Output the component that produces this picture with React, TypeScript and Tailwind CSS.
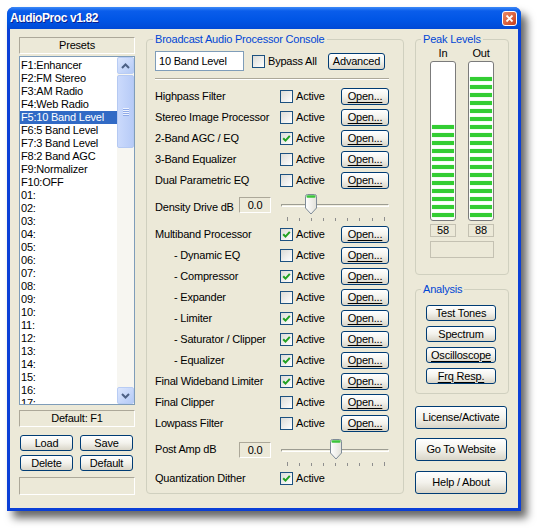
import React from 'react';

type Row = { label: string; on: boolean; sub?: boolean };

const presets = [
  'F1:Enhancer',
  'F2:FM Stereo',
  'F3:AM Radio',
  'F4:Web Radio',
  'F5:10 Band Level',
  'F6:5 Band Level',
  'F7:3 Band Level',
  'F8:2 Band AGC',
  'F9:Normalizer',
  'F10:OFF',
  ...Array.from({ length: 17 }, (_, i) => String(i + 1).padStart(2, '0') + ':'),
];

const topRows: Row[] = [
  { label: 'Highpass Filter', on: false },
  { label: 'Stereo Image Processor', on: false },
  { label: '2-Band AGC / EQ', on: true },
  { label: '3-Band Equalizer', on: false },
  { label: 'Dual Parametric EQ', on: false },
];

const midRows: Row[] = [
  { label: 'Multiband Processor', on: true },
  { label: '- Dynamic EQ', on: false, sub: true },
  { label: '- Compressor', on: true, sub: true },
  { label: '- Expander', on: false, sub: true },
  { label: '- Limiter', on: true, sub: true },
  { label: '- Saturator / Clipper', on: true, sub: true },
  { label: '- Equalizer', on: true, sub: true },
  { label: 'Final Wideband Limiter', on: true },
  { label: 'Final Clipper', on: false },
  { label: 'Lowpass Filter', on: false },
];

const sunken = 'border border-t-[#ACA899] border-l-[#ACA899] border-b-white border-r-white bg-[#ECE9D8]';

const XpButton = ({ children, className = '', u }: { children: React.ReactNode; className?: string; u?: boolean }) => (
  <button
    type="button"
    className={`flex items-center justify-center rounded-[3px] border border-[#003C74] bg-linear-to-b from-white via-[#F3F2EC] to-[#D9D5C8] text-black leading-none ${className}`}
  >
    <span className={u ? 'underline underline-offset-[2px]' : ''}>{children}</span>
  </button>
);

const Check = ({ on }: { on?: boolean }) => (
  <span className="flex h-[13px] w-[13px] shrink-0 items-center justify-center border border-[#1C5180] bg-linear-to-br from-[#DCDCD7] to-white">
    {on && (
      <svg width="9" height="9" viewBox="0 0 9 9">
        <path d="M1.2 4.2 L3.5 6.6 L7.8 1.8" stroke="#21A121" strokeWidth="2" fill="none" />
      </svg>
    )}
  </span>
);

const ProcRow = ({ row }: { row: Row }) => (
  <div className="flex h-[21px] items-center">
    <span className={`w-[125px] ${row.sub ? 'pl-[19px]' : ''}`}>{row.label}</span>
    <div className="flex w-[61px] items-center">
      <Check on={row.on} />
      <span className="ml-[3px]">Active</span>
    </div>
    <XpButton className="h-[17px] w-[48px]" u>
      Open...
    </XpButton>
  </div>
);

const ticks = [6, 18, 30, 42, 54, 66, 78, 91, 103];

// trackbar with a down-pointing thumb; thumb x is the slider value
const Slider = ({ at, className = '' }: { at: number; className?: string }) => (
  <div className={`relative h-[33px] w-[108px] ${className}`}>
    <div className="absolute left-0 right-0 top-[10px] h-[3px] rounded-[1px] border border-t-[#9D9D92] border-l-[#9D9D92] border-b-white border-r-white bg-[#F1EFE2]" />
    <svg className="absolute top-0" style={{ left: at - 6 }} width="12" height="21" viewBox="0 0 12 21">
      <defs>
        <linearGradient id={`th${at}`} x1="0" y1="0" x2="1" y2="0">
          <stop offset="0" stopColor="#FFFFFF" />
          <stop offset="1" stopColor="#E3E2DA" />
        </linearGradient>
      </defs>
      <path d="M0.5 2.5 Q0.5 0.5 2.5 0.5 L9.5 0.5 Q11.5 0.5 11.5 2.5 L11.5 14 L6 20 L0.5 14 Z" fill={`url(#th${at})`} stroke="#7E8B97" />
      <rect x="1.5" y="1.2" width="9" height="2.5" rx="1" fill="#3BC43B" />
    </svg>
    {ticks.map((t, i) => (
      <div
        key={t}
        className={`absolute w-px bg-[#8E8E8E] ${i === 0 || i === ticks.length - 1 ? 'top-[23px] h-[4px]' : 'top-[24px] h-[3px]'}`}
        style={{ left: t }}
      />
    ))}
  </div>
);

const Meter = ({ bars }: { bars: number }) => (
  <div className="flex h-[160px] w-[26px] flex-col justify-end gap-[4px] rounded-[3px] border border-[#7B7B7B] bg-white px-[1px] pb-[3px]">
    {Array.from({ length: bars }).map((_, i) => (
      <div key={i} className="h-[4px] bg-[#33CD33] shadow-[0_0_1px_#6EDD6E]" />
    ))}
  </div>
);

const ScrollBtn = ({ up }: { up?: boolean }) => (
  <div className="flex h-[17px] w-[17px] items-center justify-center rounded-[2px] border border-[#B8CCF4] bg-linear-to-br from-[#DCE6FD] to-[#B4CAF6]">
    <svg width="9" height="6" viewBox="0 0 9 6">
      <path d={up ? 'M1 5 L4.5 1.5 L8 5' : 'M1 1 L4.5 4.5 L8 1'} stroke="#4D6185" strokeWidth="2" fill="none" />
    </svg>
  </div>
);

export default function App() {
  return (
    <div className="h-[532px] w-[545px] overflow-hidden bg-white pl-[7px] pt-[7px] font-['Liberation_Sans',Arial,sans-serif] text-[11px] tracking-[-0.2px] text-black">
      <div className="flex h-[504px] w-[514px] flex-col rounded-t-[7px] bg-[#0B3FD6] shadow-[6px_7px_8px_rgba(0,0,0,0.6)]">
        {/* title bar */}
        <div className="flex h-[22px] items-center rounded-t-[7px] bg-[linear-gradient(to_bottom,#3D8BF7_0%,#0A5DEB_18%,#0055E5_60%,#0049D6_100%)] pl-[3px] pr-[4px]">
          <span className="text-[12px] font-bold tracking-[-0.4px] text-white [text-shadow:1px_1px_0_#0A1F8F]">AudioProc v1.82</span>
          <div className="ml-auto flex h-[15px] w-[15px] items-center justify-center rounded-[3px] border border-white bg-linear-to-br from-[#EE8A66] to-[#C43B18]">
            <svg width="9" height="9" viewBox="0 0 9 9">
              <path d="M1.5 1.5 L7.5 7.5 M7.5 1.5 L1.5 7.5" stroke="white" strokeWidth="1.8" />
            </svg>
          </div>
        </div>

        {/* client area */}
        <div className="mx-[3px] mb-[3px] flex flex-1 items-start bg-[#ECE9D8] pl-[9px]">
          {/* presets column */}
          <div className="mt-[8px] flex w-[116px] flex-col">
            <div className={`${sunken} flex h-[17px] items-center justify-center`}>Presets</div>
            <div className="mt-[2px] flex h-[349px] border border-[#7F9DB9] bg-white">
              <div className="flex-1 overflow-hidden pt-[2px]">
                {presets.map((p) => (
                  <div
                    key={p}
                    className={`h-[13px] pl-[1px] leading-[13px] ${p === 'F5:10 Band Level' ? 'bg-[#316AC5] text-white' : ''}`}
                  >
                    {p}
                  </div>
                ))}
              </div>
              <div className="flex w-[17px] flex-col bg-[#F7F6F1]">
                <ScrollBtn up />
                <div className="mt-[1px] flex h-[73px] flex-col items-center justify-center gap-[1px] rounded-[2px] border border-[#B5C9F2] bg-linear-to-r from-[#CBDAFC] to-[#B7CBF7]">
                  {[0, 1, 2, 3].map((i) => (
                    <div key={i} className="h-px w-[6px] bg-[#EEF3FE] shadow-[0_1px_0_#8FAAE8]" />
                  ))}
                </div>
                <div className="mt-auto">
                  <ScrollBtn />
                </div>
              </div>
            </div>
            <div className={`${sunken} mt-[5px] flex h-[17px] items-center justify-center`}>Default: F1</div>
            <div className="mt-[8px] flex gap-[7px] pl-[1px]">
              <XpButton className="h-[16px] w-[53px]">Load</XpButton>
              <XpButton className="h-[16px] w-[53px]">Save</XpButton>
            </div>
            <div className="mt-[4px] flex gap-[7px] pl-[1px]">
              <XpButton className="h-[16px] w-[53px]">Delete</XpButton>
              <XpButton className="h-[16px] w-[53px]">Default</XpButton>
            </div>
            <div className={`${sunken} mt-[6px] h-[18px]`} />
          </div>

          {/* console group */}
          <fieldset className="ml-[11px] mt-[4px] h-[461px] w-[258px] rounded-[4px] border border-[#D0D0BF] px-[8px] pt-[6px]">
            <legend className="-ml-[2px] px-[2px] leading-[12px] text-[#0046D5]">Broadcast Audio Processor Console</legend>
            <div className="flex h-[20px] items-center">
              <div className="flex h-[20px] w-[89px] items-center border border-[#7F9DB9] bg-white pl-[3px]">10 Band Level</div>
              <div className="ml-[8px] flex w-[76px] items-center">
                <Check />
                <span className="ml-[3px]">Bypass All</span>
              </div>
              <XpButton className="h-[17px] w-[57px]">Advanced</XpButton>
            </div>
            <div className="mt-[7px] w-[234px] border-t border-b border-t-[#ACA899] border-b-white" />
            <div className="mt-[6px]">
              {topRows.map((r) => (
                <ProcRow key={r.label} row={r} />
              ))}
              <div className="flex h-[33px] items-start">
                <span className="mt-[10px] w-[84px] leading-[13px]">Density Drive dB</span>
                <div className={`${sunken} mt-[6px] flex h-[16px] w-[32px] items-center justify-center`}>0.0</div>
                <Slider at={30} className="ml-[10px] mt-[3px]" />
              </div>
              {midRows.map((r) => (
                <ProcRow key={r.label} row={r} />
              ))}
              <div className="flex h-[34px] items-start">
                <span className="mt-[9px] w-[84px] leading-[13px]">Post Amp dB</span>
                <div className={`${sunken} mt-[8px] flex h-[16px] w-[32px] items-center justify-center`}>0.0</div>
                <Slider at={55} className="ml-[10px] mt-[5px]" />
              </div>
              <div className="flex h-[21px] items-center">
                <span className="w-[125px]">Quantization Dither</span>
                <Check on />
                <span className="ml-[3px]">Active</span>
              </div>
            </div>
          </fieldset>

          {/* right column */}
          <div className="ml-[11px] mt-[4px] flex w-[94px] flex-col">
            <fieldset className="h-[242px] rounded-[4px] border border-[#D0D0BF] px-[7px] pt-[2px]">
              <legend className="-ml-[2px] px-[2px] leading-[12px] text-[#0046D5]">Peak Levels</legend>
              <div className="ml-[7px] flex gap-[12px]">
                {[
                  { name: 'In', bars: 12, v: 58 },
                  { name: 'Out', bars: 18, v: 88 },
                ].map((m) => (
                  <div key={m.name} className="flex w-[26px] flex-col items-center">
                    <span className="h-[12px] leading-[12px]">{m.name}</span>
                    <div className="mt-[2px]">
                      <Meter bars={m.bars} />
                    </div>
                    <div className="mt-[3px] flex h-[13px] w-[26px] items-center justify-center border border-[#C4C1B2] leading-none">{m.v}</div>
                  </div>
                ))}
              </div>
              <div className="ml-[7px] mt-[4px] h-[17px] w-[64px] border border-[#C4C1B2]" />
            </fieldset>

            <fieldset className="mt-[8px] h-[111px] rounded-[4px] border border-[#D0D0BF] px-[7px] pt-[10px]">
              <legend className="-ml-[2px] px-[2px] leading-[12px] text-[#0046D5]">Analysis</legend>
              <div className="flex flex-col items-center gap-[5px] pr-[2px]">
                <XpButton className="h-[16px] w-[70px]">Test Tones</XpButton>
                <XpButton className="h-[16px] w-[70px]">Spectrum</XpButton>
                <XpButton className="h-[16px] w-[70px]" u>
                  Oscilloscope
                </XpButton>
                <XpButton className="h-[16px] w-[70px]" u>
                  Frq Resp.
                </XpButton>
              </div>
            </fieldset>

            <XpButton className="mt-[12px] h-[23px] w-[92px]">License/Activate</XpButton>
            <XpButton className="mt-[9px] h-[23px] w-[92px]">Go To Website</XpButton>
            <XpButton className="mt-[10px] h-[23px] w-[92px]">Help / About</XpButton>
          </div>
        </div>
      </div>
    </div>
  );
}
